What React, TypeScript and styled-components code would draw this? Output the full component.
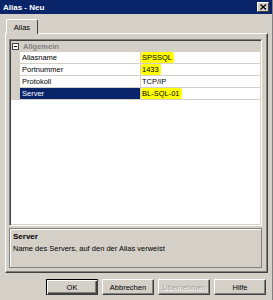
import React from "react";
import styled, { createGlobalStyle } from "styled-components";

const Global = createGlobalStyle`
  html, body { margin: 0; padding: 0; background: #d4d0c8; }
  body { font-family: "Liberation Sans", Arial, sans-serif; font-size: 7.5px; }
  * { box-sizing: border-box; }
`;

const Window = styled.div`
  width: 273px;
  height: 300px;
  background: #d4d0c8;
  display: flex;
  flex-direction: column;
  border-right: 1px solid #808080;
  overflow: hidden;
`;

const TitleBar = styled.div`
  height: 14px;
  background: #0a246a;
  display: flex;
  align-items: center;
  justify-content: space-between;
  padding: 0 3px 0 3px;
`;

const Title = styled.span`
  color: #fff;
  font-weight: bold;
  font-size: 8px;
`;

const CloseBtn = styled.div`
  width: 12px;
  height: 10px;
  background: #d4d0c8;
  border-top: 1px solid #fff;
  border-left: 1px solid #fff;
  border-right: 1px solid #404040;
  border-bottom: 1px solid #404040;
  display: flex;
  align-items: center;
  justify-content: center;
`;

const Body = styled.div`
  flex: 1;
  display: flex;
  flex-direction: column;
  padding: 5px 4px 0 5px;
`;

const TabStrip = styled.div`
  display: flex;
  height: 14px;
  padding-left: 1px;
`;

const Tab = styled.div`
  width: 32px;
  height: 15px;
  border-top: 1px solid #fff;
  border-left: 1px solid #fff;
  border-right: 1px solid #404040;
  border-top-left-radius: 2px;
  border-top-right-radius: 2px;
  background: #d4d0c8;
  display: flex;
  align-items: center;
  justify-content: center;
  font-size: 7.5px;
  color: #000;
  position: relative;
  z-index: 1;
`;

const TabPanel = styled.div`
  height: 240px;
  border-top: 1px solid #fff;
  border-left: 1px solid #fff;
  border-right: 1px solid #404040;
  border-bottom: 1px solid #404040;
  box-shadow: inset -1px -1px 0 #808080;
  padding: 5px 5px 4px 3px;
  display: flex;
  flex-direction: column;
  gap: 2px;
`;

const Grid = styled.div`
  height: 189px;
  background: #fff;
  border-top: 1px solid #808080;
  border-left: 1px solid #808080;
  border-right: 1px solid #fff;
  border-bottom: 1px solid #fff;
  box-shadow: inset 1px 1px 0 #404040, inset -1px -1px 0 #d4d0c8;
  padding: 1px;
  display: flex;
  flex-direction: column;
`;

const Row = styled.div`
  display: flex;
  height: 12px;
  border-bottom: 1px solid #d4d0c8;
`;

const CategoryRow = styled.div`
  display: flex;
  height: 11px;
  background: #d4d0c8;
  align-items: center;
`;

const Gutter = styled.div`
  width: 9px;
  flex: none;
  background: #d4d0c8;
  display: flex;
  align-items: center;
  justify-content: center;
`;

const ToggleBox = styled.div`
  width: 7px;
  height: 7px;
  border: 1px solid #404040;
  position: relative;
  background: #fff;
  &::after {
    content: "";
    position: absolute;
    left: 1px;
    top: 2px;
    width: 3px;
    height: 1px;
    background: #000;
  }
`;

const CategoryLabel = styled.span`
  color: #808080;
  font-weight: bold;
  padding-left: 3px;
`;

const LabelCell = styled.div<{ $selected?: boolean }>`
  width: 121px;
  flex: none;
  padding-left: 2px;
  display: flex;
  align-items: center;
  background: ${(p) => (p.$selected ? "#0a246a" : "#fff")};
  color: ${(p) => (p.$selected ? "#fff" : "#000")};
  border-right: 1px solid #d4d0c8;
`;

const ValueCell = styled.div`
  flex: 1;
  display: flex;
  align-items: center;
`;

const Value = styled.span<{ $mark?: boolean }>`
  background: ${(p) => (p.$mark ? "#ffff00" : "transparent")};
  padding: 1px 2px 1px 1px;
  border-radius: 2px;
  color: #000;
`;

const Description = styled.div`
  height: 40px;
  border: 1px solid #808080;
  box-shadow: inset 1px 1px 0 #fff;
  padding: 3px 3px;
  display: flex;
  flex-direction: column;
  gap: 3px;
`;

const DescTitle = styled.span`
  font-weight: bold;
  font-size: 8px;
`;

const ButtonRow = styled.div`
  display: flex;
  justify-content: flex-end;
  gap: 4px;
  padding: 6px 2px 0 0;
`;

const Button = styled.button<{ $default?: boolean; $disabled?: boolean }>`
  width: 52px;
  height: 16px;
  font-family: "Liberation Sans", Arial, sans-serif;
  font-size: 7.5px;
  background: #d4d0c8;
  color: ${(p) => (p.$disabled ? "#a0a0a0" : "#000")};
  text-shadow: ${(p) => (p.$disabled ? "1px 1px 0 #fff" : "none")};
  border: 1px solid ${(p) => (p.$default ? "#000" : "transparent")};
  border-top-color: ${(p) => (p.$default ? "#000" : "#fff")};
  border-left-color: ${(p) => (p.$default ? "#000" : "#fff")};
  border-right-color: #404040;
  border-bottom-color: #404040;
  box-shadow: ${(p) =>
    p.$default
      ? "inset 1px 1px 0 #fff, inset -1px -1px 0 #404040, inset -2px -2px 0 #808080"
      : "inset -1px -1px 0 #808080"};
  padding: 0;
`;

const rows = [
  { label: "Aliasname", value: "SPSSQL", mark: true },
  { label: "Portnummer", value: "1433", mark: true },
  { label: "Protokoll", value: "TCP/IP", mark: false },
  { label: "Server", value: "BL-SQL-01", mark: true, selected: true },
];

export default function App() {
  return (
    <>
      <Global />
      <Window>
        <TitleBar>
          <Title>Alias - Neu</Title>
          <CloseBtn>
            <svg width="7" height="6" viewBox="0 0 7 6">
              <path d="M0.5 0.5 L6 5.5 M6 0.5 L0.5 5.5" stroke="#000" strokeWidth="1.3" />
            </svg>
          </CloseBtn>
        </TitleBar>
        <Body>
          <TabStrip>
            <Tab>Alias</Tab>
          </TabStrip>
          <TabPanel>
            <Grid>
              <CategoryRow>
                <Gutter>
                  <ToggleBox />
                </Gutter>
                <CategoryLabel>Allgemein</CategoryLabel>
              </CategoryRow>
              {rows.map((r) => (
                <Row key={r.label}>
                  <Gutter />
                  <LabelCell $selected={r.selected}>{r.label}</LabelCell>
                  <ValueCell>
                    <Value $mark={r.mark}>{r.value}</Value>
                  </ValueCell>
                </Row>
              ))}
            </Grid>
            <Description>
              <DescTitle>Server</DescTitle>
              <span>Name des Servers, auf den der Alias verweist</span>
            </Description>
          </TabPanel>
          <ButtonRow>
            <Button $default>OK</Button>
            <Button>Abbrechen</Button>
            <Button $disabled>Übernehmen</Button>
            <Button>Hilfe</Button>
          </ButtonRow>
        </Body>
      </Window>
    </>
  );
}
